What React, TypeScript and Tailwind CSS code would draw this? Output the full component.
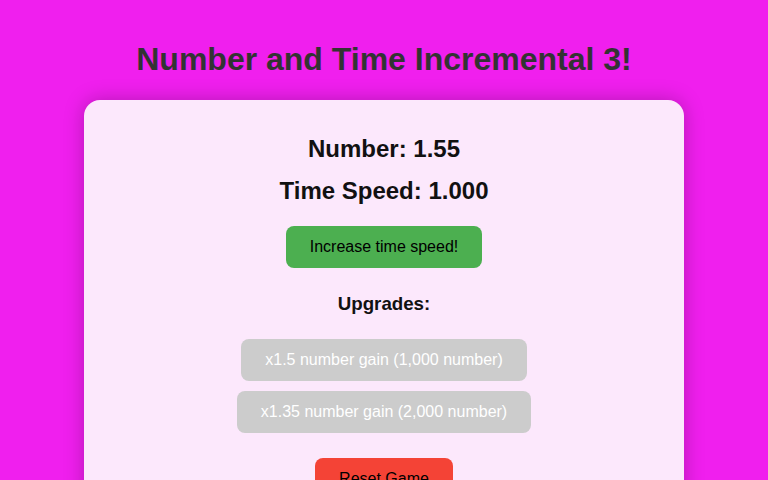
import React, { useState } from "react";

const upgrades = [
  { label: "x1.5 number gain (1,000 number)" },
  { label: "x1.35 number gain (2,000 number)" },
];

export default function App() {
  const [number] = useState(1.55);
  const [speed] = useState(1);

  return (
    <div className="min-h-screen bg-[#f01fee] flex flex-col items-center pt-[41px] font-['Liberation_Sans',Arial,sans-serif]">
      <h1 className="text-[32px] leading-[37px] font-bold text-[#333333]">
        Number and Time Incremental 3!
      </h1>

      <div className="mt-[22px] w-[600px] bg-[#fce8fc] rounded-2xl shadow-[0_0_20px_rgba(0,0,0,0.25)] flex flex-col items-center pt-[35px] pb-8 text-[#111111]">
        <h2 className="text-2xl leading-[28px] font-bold">
          Number: {number.toFixed(2)}
        </h2>
        <h2 className="mt-[14px] text-2xl leading-[28px] font-bold">
          Time Speed: {speed.toFixed(3)}
        </h2>

        <button className="mt-[21px] bg-[#4caf50] text-black text-base leading-[18px] px-6 py-3 rounded-lg">
          Increase time speed!
        </button>

        <h3 className="mt-[25px] text-[18.72px] leading-[22px] font-bold">Upgrades:</h3>

        <div className="mt-[24px] flex flex-col items-center gap-[10px]">
          {upgrades.map((u) => (
            <button
              key={u.label}
              disabled
              className="bg-[#cccccc] text-white text-base leading-[18px] px-6 py-3 rounded-lg"
            >
              {u.label}
            </button>
          ))}
        </div>

        <button className="mt-[25px] bg-[#f44336] text-black text-base leading-[18px] px-6 py-3 rounded-lg">
          Reset Game
        </button>
      </div>
    </div>
  );
}
